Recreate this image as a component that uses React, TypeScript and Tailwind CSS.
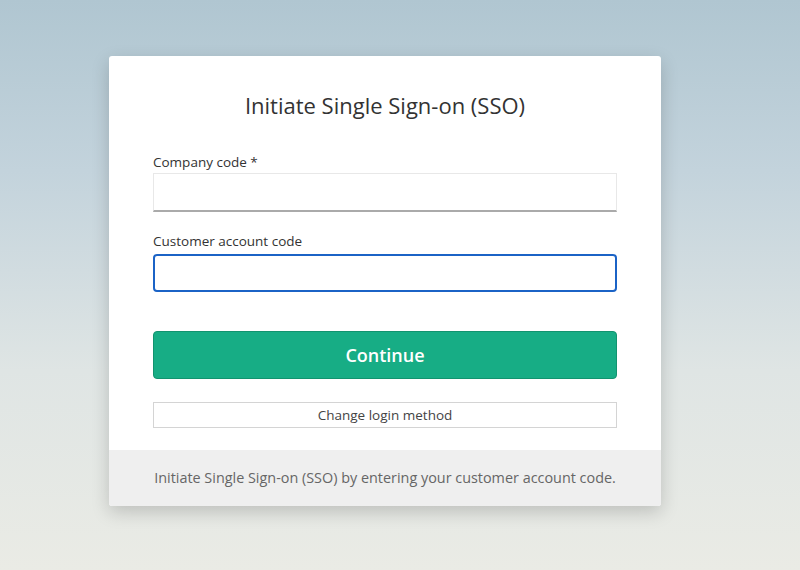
export default function App() {
  return (
    <main className="h-[570px] w-full overflow-hidden bg-[linear-gradient(180deg,#b0c6d1_0%,#c3d3dc_30%,#dfe5e4_65%,#eaebe5_100%)] pt-[56px] font-['Open_Sans',sans-serif]">
      <div className="ml-[109px] w-[552px] rounded-[3px] bg-white shadow-[0_6px_18px_rgba(0,0,0,0.18)] overflow-hidden">
        <div className="px-[44px] pt-[34px] pb-[22px]">
          <h1 className="text-center text-[22px] leading-[30px] text-[#333]">Initiate Single Sign-on (SSO)</h1>

          <label className="mt-[32px] mb-[1px] block text-[13.5px] leading-[20px] text-[#333]">Company code *</label>
          <input className="block h-[39px] w-full border border-[#e8e8e8] border-b-2 border-b-[#aaaaaa] bg-white outline-none" />

          <label className="mt-[19px] mb-[3px] block text-[13.5px] leading-[20px] text-[#333]">Customer account code</label>
          <input className="block h-[38px] w-full rounded-[4px] border-2 border-[#1b63c6] bg-white outline-none" />

          <button className="mt-[39px] flex h-[48px] w-full items-center justify-center rounded-[4px] border border-[#12936f] bg-[#17ad85] text-[18px] font-semibold text-white">
            Continue
          </button>

          <button className="mt-[23px] flex h-[26px] w-full items-center justify-center border border-[#d4d4d4] bg-white text-[13.5px] text-[#444]">
            Change login method
          </button>
        </div>
        <div className="flex h-[56px] items-center justify-center bg-[#efefef] text-[14.4px] text-[#666]">
          Initiate Single Sign-on (SSO) by entering your customer account code.
        </div>
      </div>
    </main>
  )
}
